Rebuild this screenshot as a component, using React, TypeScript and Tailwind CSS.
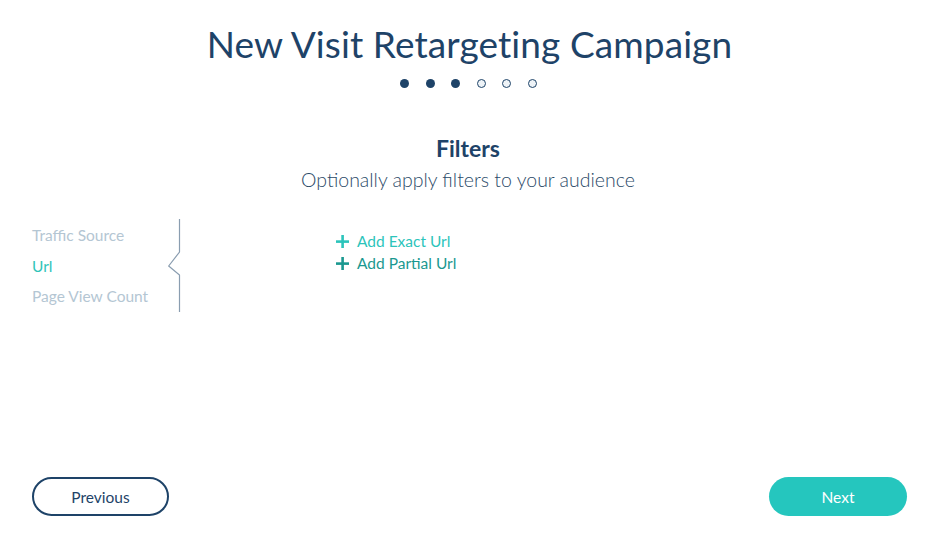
import React from "react";

function Plus({ color }: { color: string }) {
  return (
    <svg width="13" height="13" viewBox="0 0 13 13" className="shrink-0">
      <rect x="5.3" y="0" width="2.6" height="13" fill={color} />
      <rect x="0" y="5.3" width="13" height="2.6" fill={color} />
    </svg>
  );
}

export default function App() {
  const dots = [true, true, true, false, false, false];
  return (
    <div
      className="w-[936px] h-[534px] bg-white flex flex-col text-[#1e4368]"
      style={{ fontFamily: "Lato, 'Noto Sans', sans-serif" }}
    >
      <h1 className="text-center text-[37px] leading-[44px] mt-[22px] font-normal tracking-[0.1px] pl-[3px]">
        New Visit Retargeting Campaign
      </h1>
      <div className="flex justify-center gap-[16.5px] mt-[13px] pl-[1px]">
        {dots.map((f, i) => (
          <span
            key={i}
            className={
              f
                ? "w-[9px] h-[9px] rounded-full bg-[#1e4368]"
                : "w-[9px] h-[9px] rounded-full border-[1.5px] border-[#1e4368] bg-[#eef3f7]"
            }
          />
        ))}
      </div>
      <h2 className="text-center text-[23px] leading-[28px] font-bold mt-[46px]">Filters</h2>
      <p className="text-center text-[19.5px] leading-[24px] font-light mt-[6px] text-[#2b4a68]">
        Optionally apply filters to your audience
      </p>
      <div className="flex mt-[27px] pl-[32px]">
        <div className="w-[136px] flex flex-col text-[15.5px] leading-[20px] pt-[6px] gap-[10.5px]">
          <span className="text-[#b4c6d3]">Traffic Source</span>
          <span className="text-[#2ec4b9]">Url</span>
          <span className="text-[#b4c6d3]">Page View Count</span>
        </div>
        <svg width="13" height="93" viewBox="0 0 13 93" className="shrink-0">
          <path
            d="M11.5 0 V33 L0.7 47 L11.5 56 V93"
            fill="none"
            stroke="#8a9db0"
            strokeWidth="1.2"
          />
        </svg>
        <div className="ml-[155px] flex flex-col text-[15.5px] leading-[22px] pt-[11px]">
          <div className="flex items-center gap-[8px] text-[#2cc4bb]">
            <Plus color="#2cc4bb" />
            <span>Add Exact Url</span>
          </div>
          <div className="flex items-center gap-[8px] text-[#1a9890]">
            <Plus color="#1a9890" />
            <span>Add Partial Url</span>
          </div>
        </div>
      </div>
      <div className="mt-auto flex justify-between pl-[32px] pr-[29px] pb-[18px]">
        <button className="w-[137px] h-[39px] rounded-full border-2 border-[#1e4368] text-[15.5px] leading-[20px] pt-[1px] text-[#1e4368] bg-white">
          Previous
        </button>
        <button className="w-[138px] h-[39px] rounded-full bg-[#25c6be] text-[15.5px] leading-[20px] pt-[1px] text-white">
          Next
        </button>
      </div>
    </div>
  );
}
